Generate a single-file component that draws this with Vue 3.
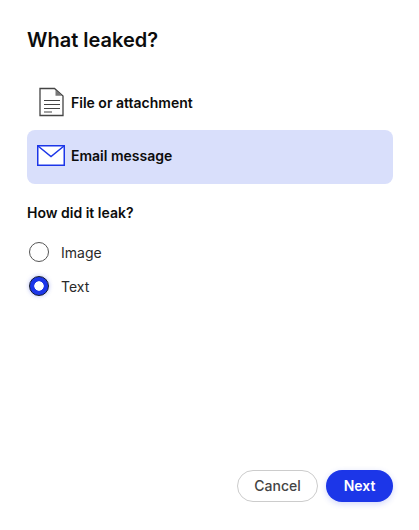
<template>
  <div class="dialog">
    <h2 class="title">What leaked?</h2>

    <div class="options">
      <div class="option">
        <svg class="icon" width="28" height="30" viewBox="0 0 28 30" fill="none" stroke="#444" stroke-width="1.3">
          <path d="M3 1.5H17.5L26 9V28.5H3Z" />
          <path d="M18.5 3L25 8.7H18.5Z" fill="#777" stroke="none" />
          <path d="M7 13.5H23M7 17.5H23M7 21.5H23M7 25H15" stroke-width="1.2" />
        </svg>
        <span>File or attachment</span>
      </div>
      <div class="option selected">
        <svg class="icon" width="28" height="22" viewBox="0 0 28 22" fill="none" stroke="#1c36e8" stroke-width="1.5">
          <rect x="0.75" y="0.75" width="26.5" height="19.5" fill="#fff" />
          <path d="M1 1L14 11.5L27 1" />
        </svg>
        <span>Email message</span>
      </div>
    </div>

    <h3 class="subtitle">How did it leak?</h3>

    <div class="radios">
      <label v-for="item in radios" :key="item" class="radio-row">
        <span class="radio" :class="{ checked: item === picked }"></span>
        <span>{{ item }}</span>
      </label>
    </div>

    <div class="footer">
      <button class="btn cancel">Cancel</button>
      <button class="btn next">Next</button>
    </div>
  </div>
</template>

<script setup>
const radios = ['Image', 'Text']
const picked = 'Text'
</script>

<style scoped>
.dialog {
  box-sizing: border-box;
  width: 419px;
  height: 530px;
  padding: 27px 26px 28px 27px;
  display: flex;
  flex-direction: column;
  background: #fff;
  color: #111;
  font-family: Inter, "Liberation Sans", sans-serif;
}

.title {
  margin: 0;
  font-size: 20px;
  line-height: 26px;
  font-weight: 600;
  color: #0c0c0c;
}

.options {
  margin-top: 23px;
  display: flex;
  flex-direction: column;
}

.option {
  height: 54px;
  padding: 0 10px 2px;
  box-sizing: border-box;
  display: flex;
  align-items: center;
  gap: 6px;
  border-radius: 8px;
  font-size: 14px;
  font-weight: 600;
  color: #0c0c0c;
}

.option.selected {
  padding-bottom: 3px;
  background: #d9dffb;
}

.icon {
  flex-shrink: 0;
}

.subtitle {
  margin: 20px 0 0;
  font-size: 14px;
  line-height: 18px;
  font-weight: 600;
  color: #0c0c0c;
}

.radios {
  margin-top: 20px;
  display: flex;
  flex-direction: column;
  gap: 14px;
}

.radio-row {
  display: flex;
  align-items: center;
  gap: 12px;
  padding-left: 2px;
  height: 20px;
  font-size: 14px;
  color: #2a2a2a;
}

.radio {
  box-sizing: border-box;
  width: 20px;
  height: 20px;
  border-radius: 50%;
  border: 1px solid #555;
  background: #fff;
}

.radio.checked {
  border: 1.5px solid #10182f;
  background: radial-gradient(circle, #fff 0 4.4px, #1c36e8 5px);
  box-shadow: 0 0 4px rgba(28, 54, 232, 0.35);
}

.footer {
  margin-top: auto;
  display: flex;
  justify-content: flex-end;
  gap: 8px;
}

.btn {
  height: 32px;
  padding: 0 0 2px;
  border-radius: 16px;
  font-family: inherit;
  font-size: 14px;
  font-weight: 500;
}

.cancel {
  width: 81px;
  background: #fff;
  border: 1px solid #ccc;
  color: #444;
}

.next {
  width: 67px;
  background: #1c36e8;
  border: none;
  color: #fff;
  font-weight: 600;
  box-shadow: 0 2px 6px rgba(28, 54, 232, 0.2);
}
</style>
